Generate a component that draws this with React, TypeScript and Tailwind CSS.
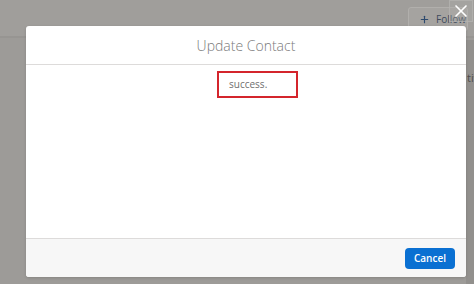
import { X, Plus } from 'lucide-react';

const App = () => {
  return (
    <div
      className="relative w-[474px] h-[284px] overflow-hidden bg-[#9d9b98]"
      style={{ fontFamily: '"Open Sans", "Liberation Sans", sans-serif' }}
    >
      {/* Page behind the backdrop */}
      <div className="h-[38px] bg-[#a09e9b] border-b-2 border-[#979592]" />
      <div className="absolute right-0 top-[40px] bottom-0 w-[8px] bg-[#92908d]" />
      <div className="absolute left-[467px] top-[70px] text-[11px] text-[#4f4e4c]">tiv</div>
      <div className="absolute left-[408px] top-[7px] w-[60px] h-[24px] flex items-center gap-[6px] pl-[10px] rounded-[3px] border border-[#b1afac] bg-[#a5a3a0] text-[10px] text-[#3e4b5c]">
        <Plus size={11} strokeWidth={2.5} className="text-[#2d4a6e]" />
        <span>Follow</span>
      </div>

      {/* Close button */}
      <div className="absolute right-[1px] top-0 w-[24px] h-[22px] flex items-center justify-center border border-[#b5b3b0]/70 bg-[#b0aeab]/30">
        <X size={20} strokeWidth={2} className="text-white" />
      </div>

      {/* Modal */}
      <div className="absolute left-[26px] top-[26px] w-[440px] h-[251px] flex flex-col bg-white rounded-[3px] overflow-hidden shadow-[0_1px_3px_rgba(0,0,0,0.15)]">
        <div className="h-[39px] flex items-center justify-center border-b border-[#dddbda]">
          <h2 className="text-[14px] font-light text-[#7a7a7a]">Update Contact</h2>
        </div>
        <div className="flex-1 pl-[191px] pt-[6px]">
          <div className="w-[81px] h-[27px] border-2 border-[#d4252c] flex items-center pl-[10px] text-[10px] text-[#6e6e6e]">
            success.
          </div>
        </div>
        <div className="h-[39px] flex items-center justify-end pr-[11px] border-t border-[#dddbda] bg-[#f7f7f7]">
          <button className="w-[50px] h-[21px] rounded-[4px] bg-[#0a70d2] text-white text-[10px] font-semibold">
            Cancel
          </button>
        </div>
      </div>
    </div>
  );
};

export default App;
